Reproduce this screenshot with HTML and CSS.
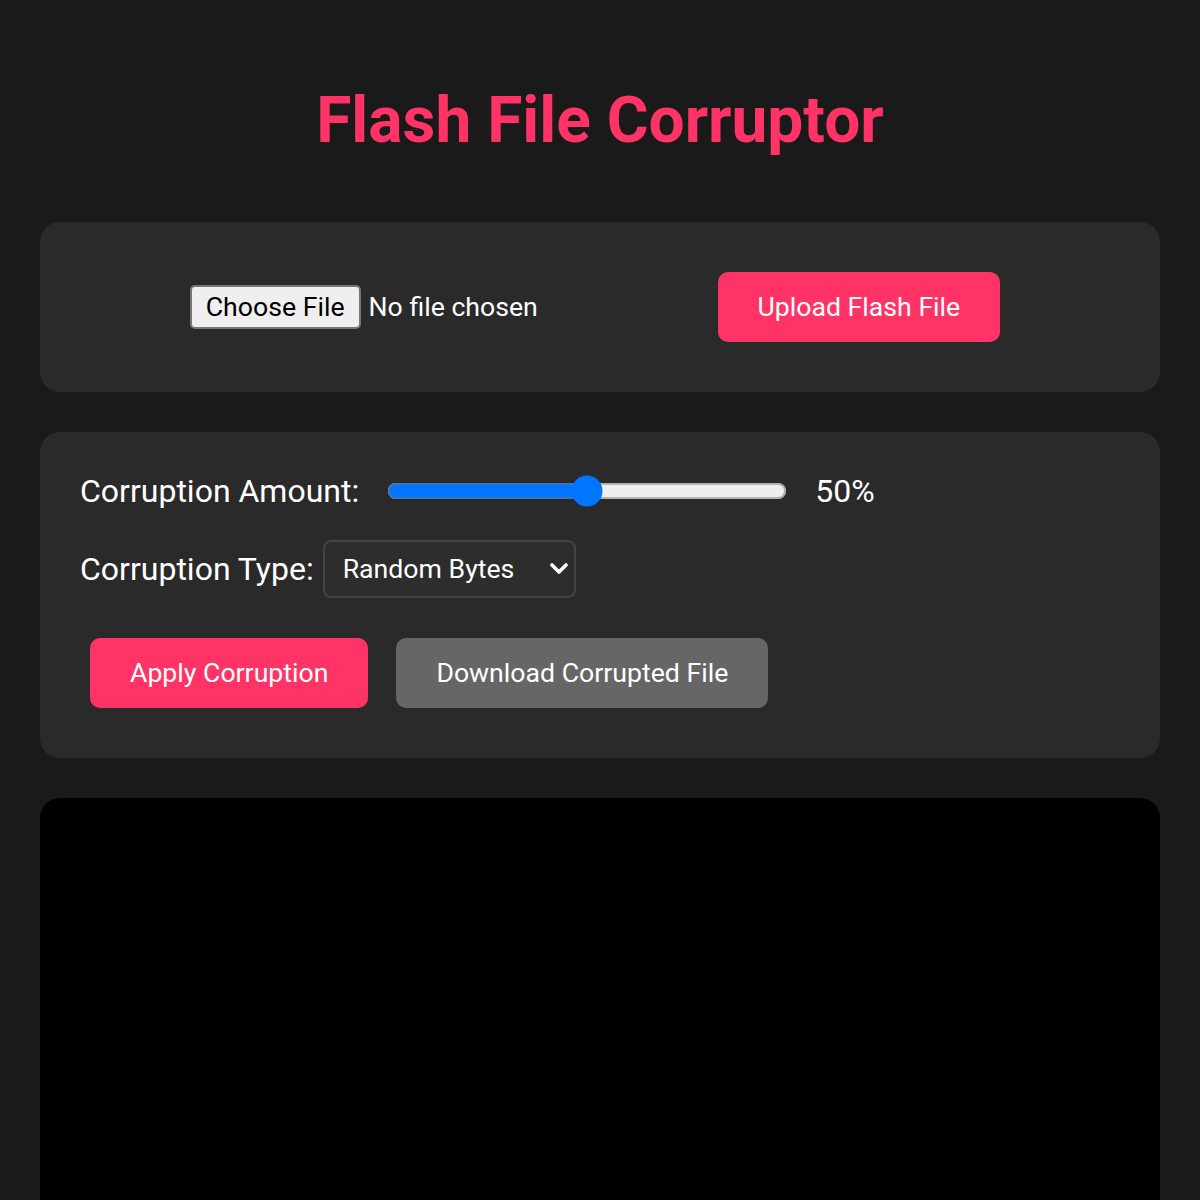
FILE: index.html
```html
<!DOCTYPE html>
<html lang="en">
<head>
<meta charset="utf-8">
<title>Flash File Corruptor</title>
<link rel="stylesheet" href="styles.css">
</head>
<body>
<div class="container">
  <h1 class="title">Flash File Corruptor</h1>
  <div class="panel upload-panel">
    <input type="file" class="file-input" accept=".swf">
    <button class="btn btn-primary">Upload Flash File</button>
  </div>
  <div class="panel controls-panel">
    <div class="control-group">
      <label class="control-label">Corruption Amount:</label>
      <input type="range" class="range" min="0" max="100" value="50">
      <span class="range-value">50%</span>
    </div>
    <div class="control-group">
      <label class="control-label type-label">Corruption Type:</label>
      <span class="select-wrap">
        <select class="select">
          <option>Random Bytes</option>
          <option>Bit Flip</option>
          <option>Shuffle</option>
        </select>
        <svg class="select-arrow" width="9" height="6" viewBox="0 0 9 6" aria-hidden="true">
          <path d="M1 1 L4.5 4.5 L8 1" fill="none" stroke="#ffffff" stroke-width="1.8" stroke-linecap="round" stroke-linejoin="round"/>
        </svg>
      </span>
    </div>
    <div class="button-row">
      <button class="btn btn-primary">Apply Corruption</button>
      <button class="btn btn-secondary">Download Corrupted File</button>
    </div>
  </div>
  <div class="player"></div>
</div>
</body>
</html>
```
FILE: styles.css
```css
html {
  zoom: 2;
}
body {
  margin: 0;
  padding: 20px;
  background: #1a1a1a;
  color: #ffffff;
  font-family: Roboto, "Liberation Sans", Arial, sans-serif;
  font-size: 16px;
}
.container {
  max-width: 800px;
  margin: 0 auto;
}
.title {
  color: #ff3366;
  text-align: center;
  font-size: 32px;
  font-weight: 700;
  margin: 21.44px 0 32px;
}
.panel {
  background: #2a2a2a;
  border-radius: 10px;
  padding: 20px;
  margin-bottom: 20px;
}
.upload-panel {
  display: flex;
  align-items: center;
  justify-content: space-evenly;
}
.file-input {
  width: 204px;
  color: #ffffff;
  font-family: Roboto, "Liberation Sans", Arial, sans-serif;
  font-size: 13.333px;
  margin: 0;
}
.file-input::file-selector-button {
  font-family: Roboto, "Liberation Sans", Arial, sans-serif;
  font-size: 13.333px;
}
.btn {
  font-family: Roboto, "Liberation Sans", Arial, sans-serif;
  font-size: 13.333px;
  color: #ffffff;
  border: none;
  border-radius: 5px;
  padding: 9.5px 20px;
  margin: 5px;
  cursor: pointer;
}
.btn-primary {
  background: #ff3366;
}
.btn-secondary {
  background: #666666;
}
.control-group {
  display: flex;
  align-items: center;
  margin-bottom: 15px;
}
.control-label {
  margin-right: 10px;
}
.type-label {
  margin-right: 4.5px;
}
.range {
  width: 200px;
  margin: 0 2px 0 4px;
}
.range-value {
  margin-left: 12px;
}
.select-wrap {
  position: relative;
  display: inline-flex;
}
.select {
  appearance: none;
  -webkit-appearance: none;
  box-sizing: border-box;
  width: 126.5px;
  height: 29px;
  font-family: Roboto, "Liberation Sans", Arial, sans-serif;
  font-size: 13.333px;
  background: #2d2d2d;
  color: #ffffff;
  border: 1px solid #444444;
  border-radius: 4px;
  padding: 5px 30px 5px 9px;
  margin: 0;
}
.select-arrow {
  position: absolute;
  right: 4px;
  top: 11.5px;
  pointer-events: none;
}
.button-row {
  display: block;
}
.player {
  background: #000000;
  border-radius: 10px;
  height: 400px;
}
```
